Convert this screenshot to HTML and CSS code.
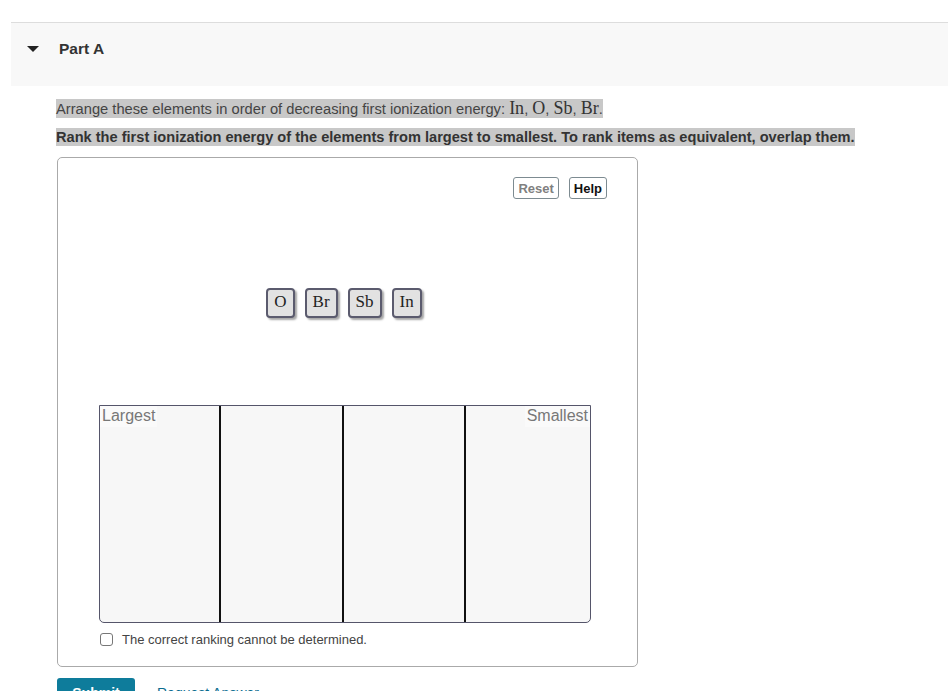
FILE: index.html
```html
<!DOCTYPE html>
<html>
<head>
<meta charset="utf-8">
<link rel="stylesheet" href="styles.css">
</head>
<body>
<div class="header">
  <span class="caret"></span>
  <span class="part-title">Part A</span>
</div>
<div class="content">
  <p class="q1"><span class="hl">Arrange these elements in order of decreasing first ionization energy: <span class="math">In</span>, <span class="math">O</span>, <span class="math">Sb</span>, <span class="math">Br</span>.</span></p>
  <p class="q2"><span class="hl">Rank the first ionization energy of the elements from largest to smallest. To rank items as equivalent, overlap them.</span></p>
  <div class="box">
    <div class="toolbar">
      <button class="btn reset">Reset</button>
      <button class="btn help">Help</button>
    </div>
    <div class="tiles">
      <span class="tile">O</span>
      <span class="tile">Br</span>
      <span class="tile">Sb</span>
      <span class="tile">In</span>
    </div>
    <div class="rank">
      <div class="cell"><span class="lbl">Largest</span></div>
      <div class="cell"></div>
      <div class="cell"></div>
      <div class="cell right"><span class="lbl">Smallest</span></div>
    </div>
    <label class="check"><span class="cb"></span>The correct ranking cannot be determined.</label>
  </div>
  <div class="actions">
    <button class="submit">Submit</button>
    <a class="req">Request Answer</a>
  </div>
</div>
</body>
</html>
```
FILE: styles.css
```css
html, body {
  margin: 0;
  padding: 0;
  background: #fff;
  font-family: "Liberation Sans", Arial, sans-serif;
  overflow: hidden;
}
body {
  width: 948px;
  height: 691px;
}
.header {
  margin: 22px 0 0 11px;
  height: 62px;
  border-top: 1px solid #dddddd;
  background: #f8f8f8;
  display: flex;
  align-items: flex-start;
  padding-bottom: 1px;
}
.caret {
  width: 0;
  height: 0;
  border-left: 6px solid transparent;
  border-right: 6px solid transparent;
  border-top: 6px solid #222;
  margin-left: 16px;
  margin-top: 23px;
}
.part-title {
  margin-left: 20px;
  font-weight: bold;
  font-size: 15.5px;
  line-height: 18px;
  color: #333;
  margin-top: 17px;
}
.content {
  padding-left: 56px;
}
.q1 {
  margin: 12px 0 0 0;
  font-size: 14.7px;
  color: #444;
  line-height: 20px;
}
.hl {
  background: #c8c8c8;
  padding: 1px 0 1px 0;
}
.q1 .hl { padding: 2px 0 1px 0; }
.math {
  font-family: "Liberation Serif", "Times New Roman", serif;
  font-size: 18px;
  color: #333;
}
.q2 {
  margin: 8px 0 0 0;
  font-size: 14.6px;
  font-weight: bold;
  color: #333;
  line-height: 20px;
}
.box {
  margin-top: 10px;
  margin-left: 1px;
  width: 579px;
  height: 508px;
  border: 1px solid #aaaaaa;
  border-radius: 5px;
  box-sizing: content-box;
  display: flex;
  flex-direction: column;
}
.toolbar {
  display: flex;
  justify-content: flex-end;
  gap: 10px;
  padding: 19px 30px 0 0;
}
.btn {
  font-family: "Liberation Sans", Arial, sans-serif;
  font-size: 13px;
  font-weight: bold;
  background: #fff;
  border: 1px solid #7d8b91;
  border-radius: 3px;
  padding: 0 4px;
  height: 22px;
  line-height: 19px;
  margin: 0;
}
.reset { color: #808080; }
.help { color: #111; }
.tiles {
  display: flex;
  justify-content: center;
  gap: 10px;
  margin-top: 89px;
  padding-right: 7px;
}
.tile {
  font-family: "Liberation Serif", "Times New Roman", serif;
  font-size: 17px;
  color: #222;
  background: #e2e2e2;
  border: 2px solid #5b5b6e;
  border-radius: 4px;
  height: 26px;
  line-height: 24px;
  padding: 0 6px;
  box-shadow: 2px 2px 2px rgba(0,0,0,0.35);
}
.rank {
  margin: 87px 0 0 41px;
  width: 490px;
  height: 216px;
  border: 1px solid #55556a;
  border-radius: 0 0 5px 5px;
  background: #f7f7f7;
  display: grid;
  grid-template-columns: 121px 123px 122px 1fr;
}
.cell {
  border-right: 2px solid #111;
  position: relative;
}
.cell.right { border-right: none; text-align: right; }
.lbl {
  display: inline-block;
  background: #fafafa;
  color: #777;
  font-size: 16px;
  padding: 2px 2px 3px 2px;
  line-height: 16px;
}
.check {
  display: flex;
  align-items: center;
  margin: 9px 0 0 42px;
  font-size: 13px;
  color: #444;
}
.cb {
  width: 11px;
  height: 11px;
  border: 1px solid #777;
  border-radius: 3px;
  background: #fff;
  margin-right: 9px;
}
.actions {
  display: flex;
  align-items: flex-start;
  margin-top: 11px;
  margin-left: 1px;
}
.submit {
  width: 78px;
  height: 30px;
  background: #0e7c9b;
  color: #fff;
  border: none;
  border-radius: 3px;
  font-family: "Liberation Sans", Arial, sans-serif;
  font-size: 14px;
  font-weight: bold;
  padding: 0;
  margin: 0;
}
.req {
  margin-left: 22px;
  margin-top: 7px;
  font-size: 14px;
  color: #0a6c8f;
}
```
